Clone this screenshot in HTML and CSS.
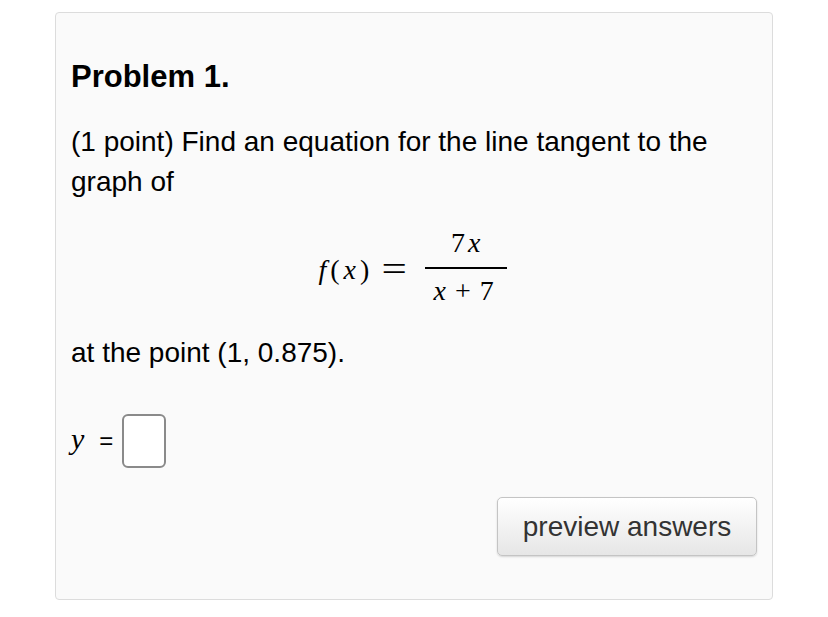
FILE: index.html
```html
<!DOCTYPE html>
<html lang="en">
<head>
    <meta charset="UTF-8">
    <meta name="viewport" content="width=device-width, initial-scale=1.0">
    <title>Problem 1</title>
    <link rel="stylesheet" href="styles.css">
</head>
<body>
    <div class="problem">
        <h2 class="problem-title">Problem 1.</h2>
        <p class="problem-text first">(1 point) Find an equation for the line tangent to the graph of</p>

        <div class="math-display">
            <span class="math lhs"><i>f</i><span class="paren">(</span><i>x</i><span class="paren">)</span></span>
            <span class="math eq">=</span>
            <span class="frac">
                <span class="num math">7<i>x</i></span>
                <span class="den math"><i>x</i><span class="op">+</span>7</span>
            </span>
        </div>

        <p class="problem-text">at the point (1, 0.875).</p>

        <div class="answer-row">
            <span class="math var"><i>y</i></span>
            <span class="equals">=</span>
            <input type="text" class="answer-box">
        </div>

        <div class="actions">
            <button class="preview-button">preview answers</button>
        </div>
    </div>
</body>
</html>
```

FILE: styles.css
```css
/* Basic styles */
body {
    font-family: "Liberation Sans", Arial, sans-serif;
    margin: 0;
    padding: 12px 0 0 55px;
    background: #fff;
    color: #000;
}
.problem {
    width: 686px;
    padding: 0 15px 43px 15px;
    background-color: #fafafa;
    border: 1px solid #dcdcdc;
    border-radius: 4px;
}
.problem-title {
    font-size: 31px;
    font-weight: bold;
    margin: 0;
    padding-top: 46px;
    line-height: 36px;
}
.problem-text {
    font-size: 28px;
    line-height: 40px;
    margin: 27px 0 0 0;
    width: 660px;
}
.math {
    font-family: "Liberation Serif", "DejaVu Serif", serif;
    font-size: 28px;
}
.math i {
    font-style: italic;
}
.math-display {
    display: flex;
    align-items: center;
    justify-content: center;
    margin: 26px 0 0 0;
    padding-right: 6px;
}
.lhs {
    padding-top: 6px;
}
.lhs i {
    padding: 0 3px;
}
.paren {
    padding: 0 1px;
}
.eq {
    font-size: 36px;
    margin: 4px 20px 0 14px;
    transform: scaleX(1.25);
}
.frac {
    display: inline-flex;
    flex-direction: column;
    align-items: center;
}
.num {
    width: 82px;
    text-align: center;
    line-height: 30px;
    padding-bottom: 9px;
    border-bottom: 2px solid #000;
}
.num i {
    padding-left: 3px;
}
.den {
    line-height: 30px;
    padding-top: 7px;
    padding-right: 4px;
}
.op {
    padding: 0 9px;
}
.answer-row {
    display: flex;
    align-items: center;
    margin-top: 41px;
}
.var {
    font-size: 30px;
    margin: 0 3px 0 0;
    padding-bottom: 4px;
}
.equals {
    font-size: 24px;
    margin: 0 9px 0 12px;
}
.answer-box {
    width: 40px;
    height: 50px;
    padding: 0;
    border: 2px solid #8a8a8a;
    border-radius: 6px;
    background: #fff;
}
.actions {
    display: flex;
    justify-content: flex-end;
    margin-top: 29px;
}
.preview-button {
    width: 260px;
    height: 59px;
    font-family: "Liberation Sans", Arial, sans-serif;
    font-size: 28px;
    color: #333;
    background: linear-gradient(#ffffff, #e6e6e6);
    border: 1px solid #c4c4c4;
    border-radius: 5px;
    box-shadow: 0 1px 2px rgba(0, 0, 0, 0.15);
    cursor: pointer;
}
```
